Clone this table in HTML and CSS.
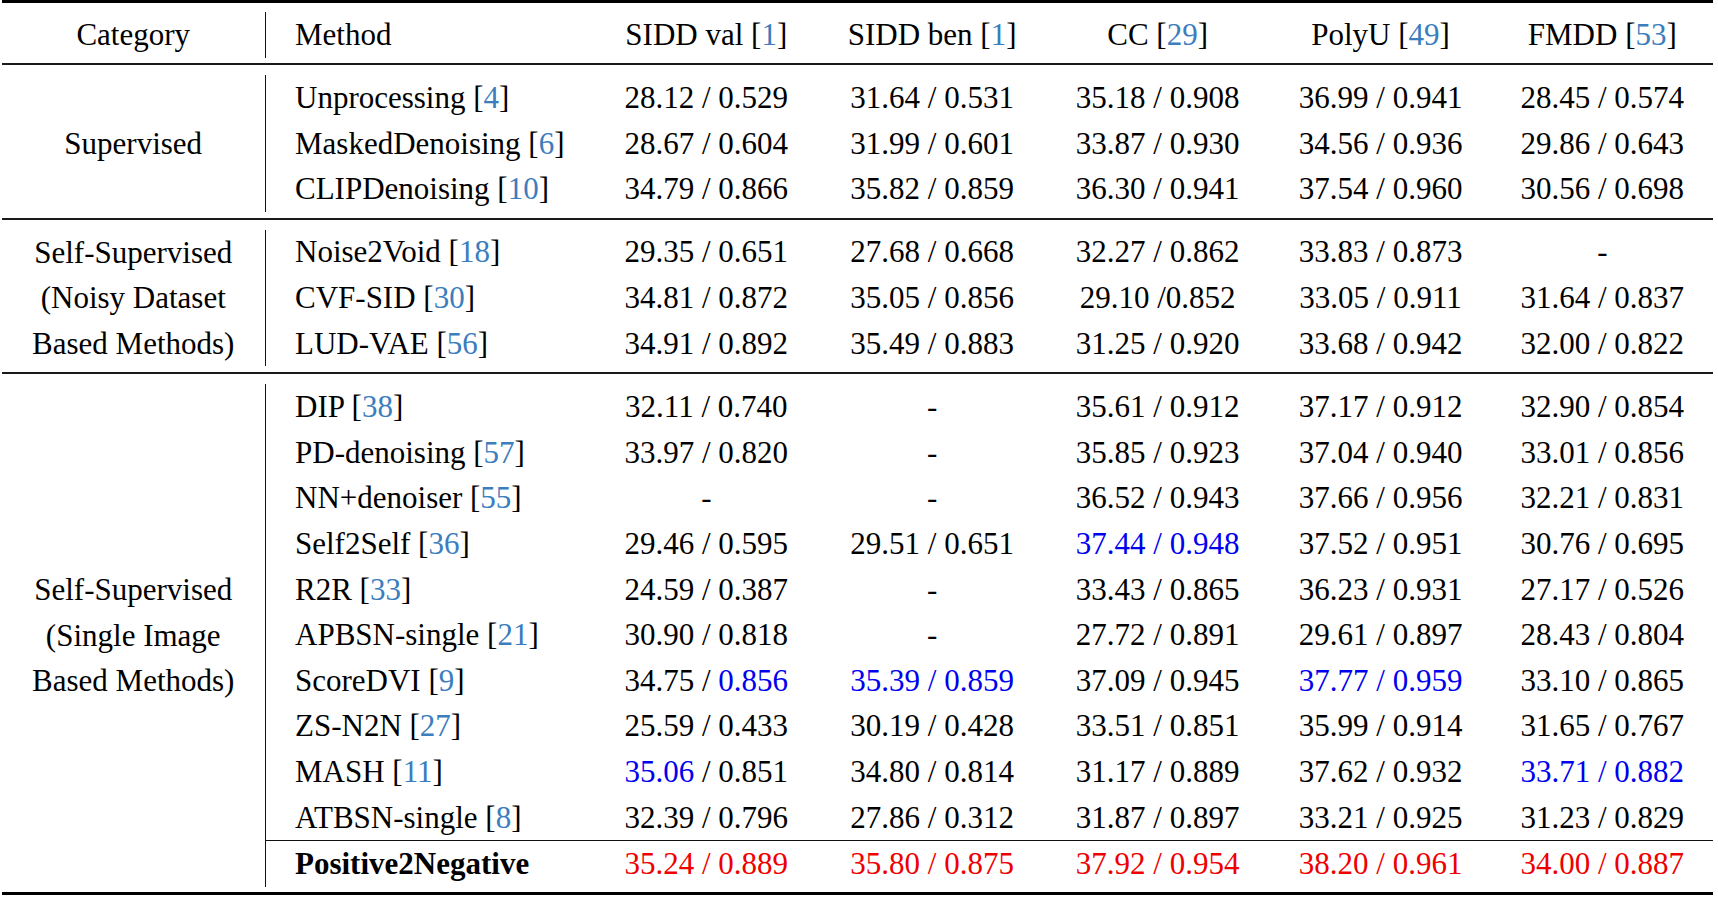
FILE: index.html
```html
<!DOCTYPE html>
<html>
<head>
<meta charset="utf-8">
<link rel="stylesheet" href="styles.css">
</head>
<body>
<div class="table">
  <div class="rule thick"></div>

  <div class="section head">
    <div class="cat"><div>Category</div></div>
    <div class="vbar"></div>
    <div class="rows">
      <div class="row">
        <div class="m">Method</div>
        <div class="c">SIDD val [<span class="cite">1</span>]</div>
        <div class="c">SIDD ben [<span class="cite">1</span>]</div>
        <div class="c">CC [<span class="cite">29</span>]</div>
        <div class="c">PolyU [<span class="cite">49</span>]</div>
        <div class="c">FMDD [<span class="cite">53</span>]</div>
      </div>
    </div>
  </div>

  <div class="rule mid"></div>

  <div class="section s1">
    <div class="cat"><div>Supervised</div></div>
    <div class="vbar"></div>
    <div class="rows">
      <div class="row">
        <div class="m">Unprocessing [<span class="cite">4</span>]</div>
        <div class="c">28.12 / 0.529</div><div class="c">31.64 / 0.531</div><div class="c">35.18 / 0.908</div><div class="c">36.99 / 0.941</div><div class="c">28.45 / 0.574</div>
      </div>
      <div class="row">
        <div class="m">MaskedDenoising [<span class="cite">6</span>]</div>
        <div class="c">28.67 / 0.604</div><div class="c">31.99 / 0.601</div><div class="c">33.87 / 0.930</div><div class="c">34.56 / 0.936</div><div class="c">29.86 / 0.643</div>
      </div>
      <div class="row">
        <div class="m">CLIPDenoising [<span class="cite">10</span>]</div>
        <div class="c">34.79 / 0.866</div><div class="c">35.82 / 0.859</div><div class="c">36.30 / 0.941</div><div class="c">37.54 / 0.960</div><div class="c">30.56 / 0.698</div>
      </div>
    </div>
  </div>

  <div class="rule mid"></div>

  <div class="section s2">
    <div class="cat"><div>Self-Supervised<br>(Noisy Dataset<br>Based Methods)</div></div>
    <div class="vbar"></div>
    <div class="rows">
      <div class="row">
        <div class="m">Noise2Void [<span class="cite">18</span>]</div>
        <div class="c">29.35 / 0.651</div><div class="c">27.68 / 0.668</div><div class="c">32.27 / 0.862</div><div class="c">33.83 / 0.873</div><div class="c">-</div>
      </div>
      <div class="row">
        <div class="m">CVF-SID [<span class="cite">30</span>]</div>
        <div class="c">34.81 / 0.872</div><div class="c">35.05 / 0.856</div><div class="c">29.10 /0.852</div><div class="c">33.05 / 0.911</div><div class="c">31.64 / 0.837</div>
      </div>
      <div class="row">
        <div class="m">LUD-VAE [<span class="cite">56</span>]</div>
        <div class="c">34.91 / 0.892</div><div class="c">35.49 / 0.883</div><div class="c">31.25 / 0.920</div><div class="c">33.68 / 0.942</div><div class="c">32.00 / 0.822</div>
      </div>
    </div>
  </div>

  <div class="rule mid"></div>

  <div class="section s3">
    <div class="cat"><div>Self-Supervised<br>(Single Image<br>Based Methods)</div></div>
    <div class="vbar"></div>
    <div class="rows">
      <div class="row">
        <div class="m">DIP [<span class="cite">38</span>]</div>
        <div class="c">32.11 / 0.740</div><div class="c">-</div><div class="c">35.61 / 0.912</div><div class="c">37.17 / 0.912</div><div class="c">32.90 / 0.854</div>
      </div>
      <div class="row">
        <div class="m">PD-denoising [<span class="cite">57</span>]</div>
        <div class="c">33.97 / 0.820</div><div class="c">-</div><div class="c">35.85 / 0.923</div><div class="c">37.04 / 0.940</div><div class="c">33.01 / 0.856</div>
      </div>
      <div class="row">
        <div class="m">NN+denoiser [<span class="cite">55</span>]</div>
        <div class="c">-</div><div class="c">-</div><div class="c">36.52 / 0.943</div><div class="c">37.66 / 0.956</div><div class="c">32.21 / 0.831</div>
      </div>
      <div class="row">
        <div class="m">Self2Self [<span class="cite">36</span>]</div>
        <div class="c">29.46 / 0.595</div><div class="c">29.51 / 0.651</div><div class="c"><span class="blue">37.44 / 0.948</span></div><div class="c">37.52 / 0.951</div><div class="c">30.76 / 0.695</div>
      </div>
      <div class="row">
        <div class="m">R2R [<span class="cite">33</span>]</div>
        <div class="c">24.59 / 0.387</div><div class="c">-</div><div class="c">33.43 / 0.865</div><div class="c">36.23 / 0.931</div><div class="c">27.17 / 0.526</div>
      </div>
      <div class="row">
        <div class="m">APBSN-single [<span class="cite">21</span>]</div>
        <div class="c">30.90 / 0.818</div><div class="c">-</div><div class="c">27.72 / 0.891</div><div class="c">29.61 / 0.897</div><div class="c">28.43 / 0.804</div>
      </div>
      <div class="row">
        <div class="m">ScoreDVI [<span class="cite">9</span>]</div>
        <div class="c">34.75 / <span class="blue">0.856</span></div><div class="c"><span class="blue">35.39 / 0.859</span></div><div class="c">37.09 / 0.945</div><div class="c"><span class="blue">37.77 / 0.959</span></div><div class="c">33.10 / 0.865</div>
      </div>
      <div class="row">
        <div class="m">ZS-N2N [<span class="cite">27</span>]</div>
        <div class="c">25.59 / 0.433</div><div class="c">30.19 / 0.428</div><div class="c">33.51 / 0.851</div><div class="c">35.99 / 0.914</div><div class="c">31.65 / 0.767</div>
      </div>
      <div class="row">
        <div class="m">MASH [<span class="cite">11</span>]</div>
        <div class="c"><span class="blue">35.06</span> / 0.851</div><div class="c">34.80 / 0.814</div><div class="c">31.17 / 0.889</div><div class="c">37.62 / 0.932</div><div class="c"><span class="blue">33.71 / 0.882</span></div>
      </div>
      <div class="row">
        <div class="m">ATBSN-single [<span class="cite">8</span>]</div>
        <div class="c">32.39 / 0.796</div><div class="c">27.86 / 0.312</div><div class="c">31.87 / 0.897</div><div class="c">33.21 / 0.925</div><div class="c">31.23 / 0.829</div>
      </div>
      <div class="rule thin"></div>
      <div class="row ours">
        <div class="m"><b>Positive2Negative</b></div>
        <div class="c">35.24 / 0.889</div><div class="c">35.80 / 0.875</div><div class="c">37.92 / 0.954</div><div class="c">38.20 / 0.961</div><div class="c">34.00 / 0.887</div>
      </div>
    </div>
  </div>

  <div class="rule thick"></div>
</div>
</body>
</html>
```

FILE: styles.css
```css
html, body {
  margin: 0;
  padding: 0;
  background: #ffffff;
}

body {
  font-family: "Liberation Serif", "Times New Roman", serif;
  font-size: 31px;
  color: #000;
}

.table {
  width: 1711px;
  margin-left: 2px;
}

.rule {
  background: #000;
}
.rule.thick { height: 3px; }
.rule.mid { height: 2px; background: #1a1a1a; }
.rule.thin { height: 1px; background: #111; }

.section {
  display: flex;
  align-items: stretch;
}
.section.head { padding: 9.2px 0 5.2px; }
.section.s1 { padding: 10.2px 0 6.2px; }
.section.s2 { padding: 9.5px 0 6px; }
.section.s3 { padding: 10px 0 5px; }

.cat {
  width: 262.5px;
  display: flex;
  align-items: center;
  justify-content: center;
  text-align: center;
  line-height: 45.6px;
}

.vbar {
  width: 1.5px;
  background: #111;
}

.rows {
  flex: 1;
  display: flex;
  flex-direction: column;
}

.row {
  display: grid;
  grid-template-columns: 328px 224.6px 227px 224px 222px 1fr;
  height: 45.6px;
  align-items: center;
  white-space: nowrap;
}

.m {
  padding-left: 29px;
}

.c {
  text-align: center;
}

.cite { color: #3b7dbd; }
.blue { color: #0000f0; }
.ours .c { color: #ee0000; }
.ours b { font-weight: bold; }
```
